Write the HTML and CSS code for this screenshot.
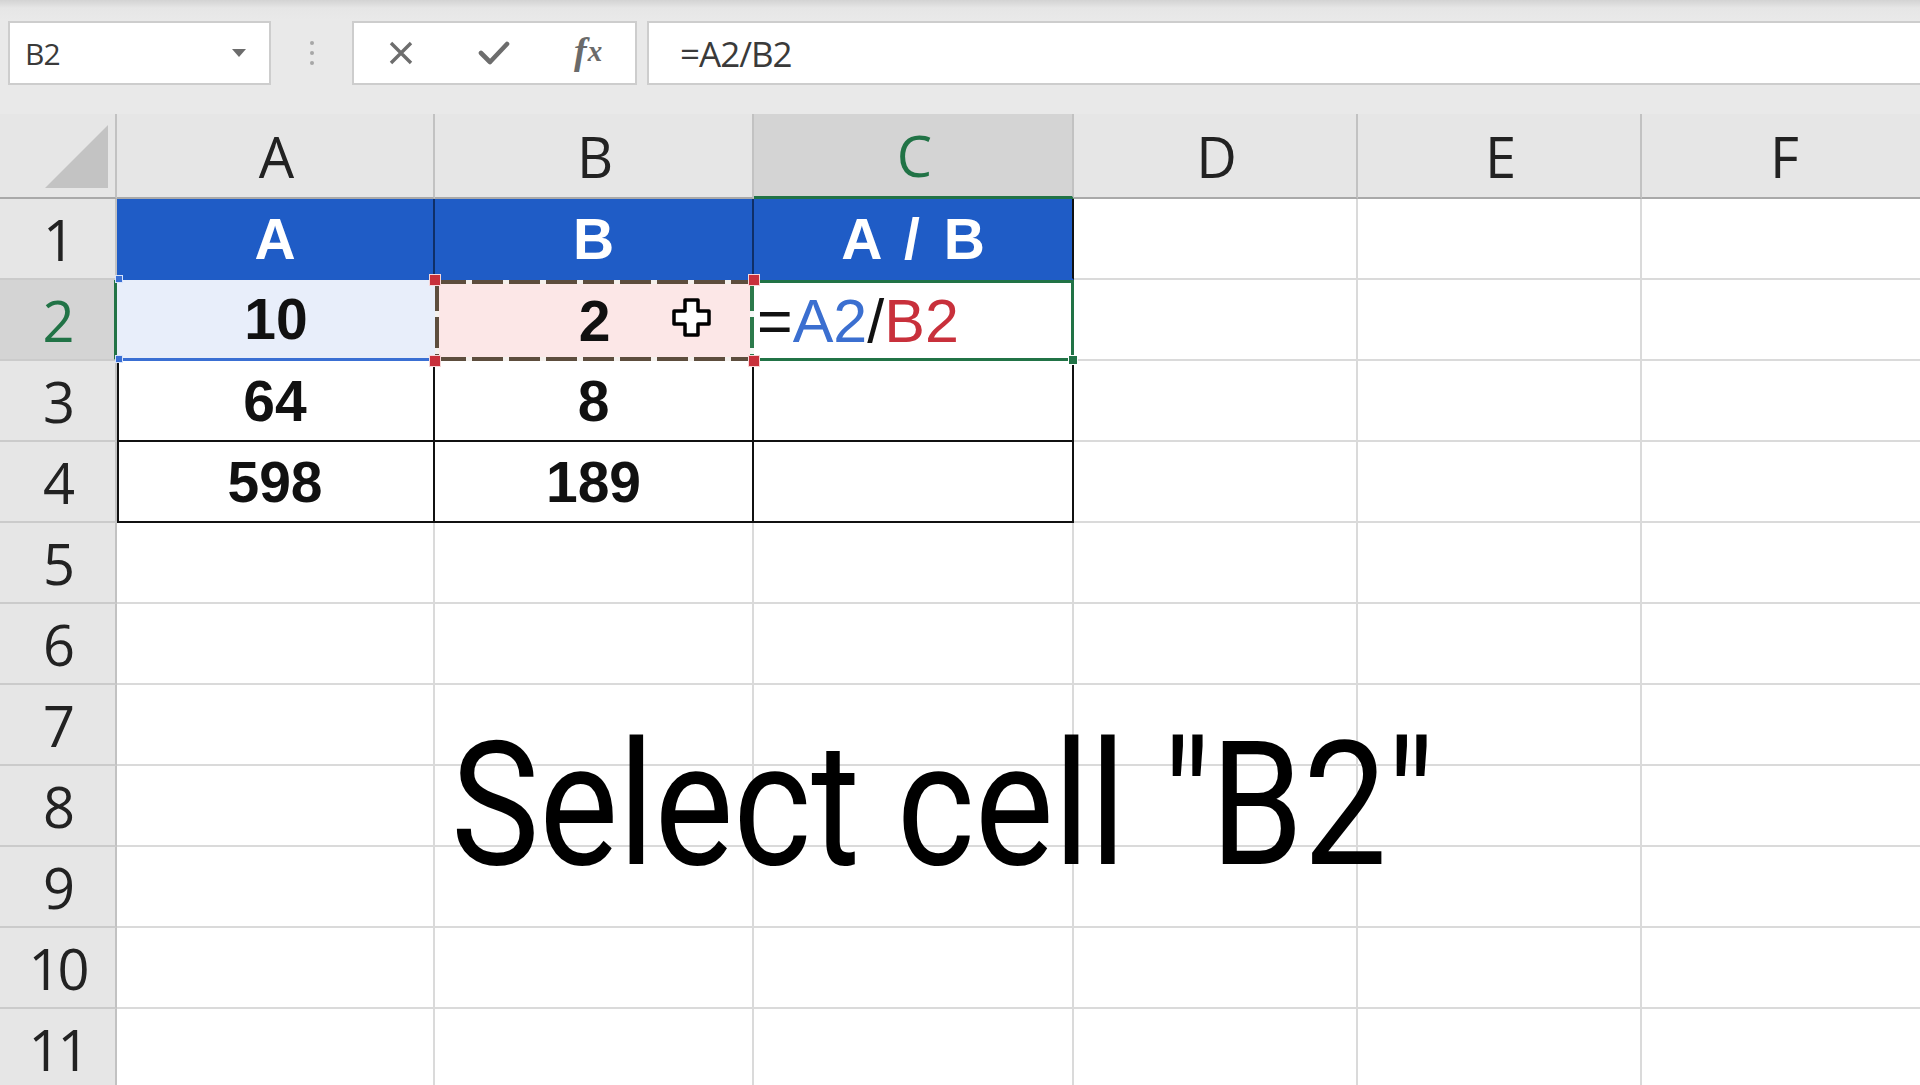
FILE: index.html
```html
<!DOCTYPE html>
<html lang="en">
<head>
<meta charset="utf-8">
<title>Excel - Select cell B2</title>
<link rel="stylesheet" href="styles.css">
</head>
<body>
<div class="app">
  <div class="fbar">
    <div class="namebox"><span class="nb-text">B2</span><span class="nb-arrow"></span></div>
    <div class="grip"><i></i><i></i><i></i></div>
    <div class="btns">
      <span class="btn"><svg width="28" height="26" viewBox="0 0 28 26"><path d="M4 3L24 23M24 3L4 23" stroke="#6d6d6d" stroke-width="3.4" fill="none"/></svg></span>
      <span class="btn"><svg width="34" height="28" viewBox="0 0 34 28"><path d="M4 14L13 23L30 5" stroke="#6d6d6d" stroke-width="4.6" fill="none" stroke-linecap="round" stroke-linejoin="round"/></svg></span>
      <span class="btn fx"><i>f</i><i class="fx-x">x</i></span>
    </div>
    <div class="formula">=A2/B2</div>
  </div>

  <div class="sheet">
    <div class="ch corner"><svg width="115" height="83" viewBox="0 0 115 83"><polygon points="45,74 108,11 108,74" fill="#c3c3c3"/></svg></div>
    <div class="ch">A</div><div class="ch">B</div><div class="ch sel">C</div><div class="ch">D</div><div class="ch">E</div><div class="ch">F</div>

    <div class="rh">1</div>
    <div class="c hdr">A</div><div class="c hdr">B</div><div class="c hdr hdr-last">A / B</div>
    <div class="c"></div><div class="c"></div><div class="c"></div>

    <div class="rh sel">2</div>
    <div class="c a2">10<span class="hd hd-blue hd-tl"></span><span class="hd hd-blue hd-bl"></span></div>
    <div class="c b2">2
      <span class="hd hd-red hd-tl"></span><span class="hd hd-red hd-tr"></span><span class="hd hd-red hd-bl"></span><span class="hd hd-red hd-br"></span>
      <svg class="cursor" width="42" height="42" viewBox="0 0 42 42"><path d="M14 3H27V14H38V27H27V38H14V27H3V14H14Z" fill="#fff" stroke="#000" stroke-width="3.5" stroke-linejoin="round"/></svg>
    </div>
    <div class="c c2"><span class="eq">=</span><span class="ref-a">A2</span><span class="eq">/</span><span class="ref-b">B2</span><span class="hd hd-green"></span></div>
    <div class="c"></div><div class="c"></div><div class="c"></div>

    <div class="rh">3</div>
    <div class="c t tl">64</div><div class="c t">8</div><div class="c t"></div>
    <div class="c"></div><div class="c"></div><div class="c"></div>

    <div class="rh">4</div>
    <div class="c t tl">598</div><div class="c t">189</div><div class="c t"></div>
    <div class="c"></div><div class="c"></div><div class="c"></div>

    <div class="rh">5</div><div class="c"></div><div class="c"></div><div class="c"></div><div class="c"></div><div class="c"></div><div class="c"></div>
    <div class="rh">6</div><div class="c"></div><div class="c"></div><div class="c"></div><div class="c"></div><div class="c"></div><div class="c"></div>
    <div class="rh">7</div><div class="c"></div><div class="c"></div><div class="c"></div><div class="c"></div><div class="c"></div><div class="c"></div>
    <div class="rh">8</div><div class="c"></div><div class="c"></div><div class="c"></div><div class="c"></div><div class="c"></div><div class="c"></div>
    <div class="rh">9</div><div class="c"></div><div class="c"></div><div class="c"></div><div class="c"></div><div class="c"></div><div class="c"></div>
    <div class="rh">10</div><div class="c"></div><div class="c"></div><div class="c"></div><div class="c"></div><div class="c"></div><div class="c"></div>
    <div class="rh">11</div><div class="c"></div><div class="c"></div><div class="c"></div><div class="c"></div><div class="c"></div><div class="c"></div>
  </div>

  <div class="caption">Select cell "B2"</div>
</div>
</body>
</html>
```

FILE: styles.css
```css
html, body {
  margin: 0;
  padding: 0;
}
body {
  width: 1920px;
  height: 1085px;
  overflow: hidden;
  background: #ffffff;
  font-family: "Open Sans", "Noto Sans", sans-serif;
}
.app {
  position: relative;
  width: 1920px;
  height: 1085px;
  overflow: hidden;
}

/* ---------- formula bar ---------- */
.fbar {
  height: 114px;
  box-sizing: border-box;
  padding-top: 21px;
  display: flex;
  align-items: flex-start;
  background: linear-gradient(#d3d3d3 0, #e6e6e6 8px, #e9e9e9 20px, #e9e9e9 100%);
}
.namebox {
  margin-left: 8px;
  width: 263px;
  height: 64px;
  box-sizing: border-box;
  background: #fff;
  border: 2px solid #cdcdcd;
  display: flex;
  align-items: center;
  padding-left: 15px;
}
.nb-text {
  font: 400 30px "Open Sans", sans-serif;
  color: #3a3a3a;
  letter-spacing: -1px;
}
.nb-arrow {
  margin-left: auto;
  margin-right: 23px;
  width: 0;
  height: 0;
  border-left: 7px solid transparent;
  border-right: 7px solid transparent;
  border-top: 8px solid #6c6c6c;
}
.grip {
  width: 81px;
  height: 64px;
  display: flex;
  flex-direction: column;
  align-items: center;
  justify-content: center;
  gap: 6px;
}
.grip i {
  display: block;
  width: 4px;
  height: 4px;
  border-radius: 50%;
  background: #a7a7a7;
}
.btns {
  width: 285px;
  height: 64px;
  box-sizing: border-box;
  background: #fff;
  border: 2px solid #cdcdcd;
  display: grid;
  grid-template-columns: 1fr 1fr 1fr;
}
.btn {
  display: flex;
  align-items: center;
  justify-content: center;
}
.fx {
  font-family: "Liberation Serif", "DejaVu Serif", serif;
  font-weight: 700;
  color: #6a6a6a;
  font-size: 38px;
  padding-bottom: 4px;
}
.fx i {
  font-style: italic;
}
.fx .fx-x {
  font-size: 29px;
  margin-left: 1px;
}
.formula {
  margin-left: 10px;
  flex: 1;
  height: 64px;
  box-sizing: border-box;
  background: #fff;
  border: 2px solid #cdcdcd;
  border-right: 0;
  display: flex;
  align-items: center;
  padding-left: 31px;
  font: 400 35px "Open Sans", sans-serif;
  color: #3a3a3a;
  letter-spacing: -1px;
}

/* ---------- sheet grid ---------- */
.sheet {
  display: grid;
  grid-template-columns: 117px 318px 319px 320px 284px 284px 284px;
  grid-template-rows: 85px repeat(11, 81px);
  width: 1926px;
}
.ch, .rh {
  box-sizing: border-box;
  background: #e6e6e6;
  display: flex;
  align-items: center;
  justify-content: center;
  font: 400 56px "Open Sans", "Noto Sans", sans-serif;
  color: #222;
  letter-spacing: -3px;
}
.ch {
  border-right: 2px solid #c2c2c2;
  border-bottom: 2px solid #a9a9a9;
}
.ch.sel {
  background: #d4d4d4;
  color: #217346;
  border-bottom: 3px solid #217346;
}
.corner {
  display: block;
  border-right: 2px solid #c2c2c2;
}
.corner svg {
  display: block;
}
.rh {
  border-right: 2px solid #c2c2c2;
  border-bottom: 2px solid #cbcbcb;
}
.rh.sel {
  background: #d4d4d4;
  color: #217346;
  border-right: 3px solid #217346;
}

.c {
  box-sizing: border-box;
  background: #fff;
  border-right: 2px solid #dadada;
  border-bottom: 2px solid #dadada;
  display: flex;
  align-items: center;
  justify-content: center;
  font: 700 57px "Liberation Sans", Arial, sans-serif;
  color: #111;
}
.hdr {
  background: #1f5cc6;
  color: #fff;
  border-right-color: #0f2f68;
  border-bottom-color: #1f5cc6;
  word-spacing: 8px;
}
.hdr-last {
  border-right-color: #111;
}
.t {
  border-right-color: #111;
  border-bottom-color: #111;
}
.tl {
  box-shadow: inset 2px 0 0 #111;
}

/* A2 reference (blue) */
.a2 {
  position: relative;
  background: #e8eefa;
  border-right: 0;
  border-bottom: 3px solid #3a6fd3;
}
/* B2 reference (red, marching ants) */
.b2 {
  position: relative;
  border: 0;
  background:
    repeating-linear-gradient(90deg, #5d4d3d 0 31px, #f4f0ec 31px 37px) left top / 100% 4px no-repeat,
    repeating-linear-gradient(90deg, #5d4d3d 0 31px, #f4f0ec 31px 37px) left bottom / 100% 4px no-repeat,
    repeating-linear-gradient(180deg, #5d4d3d 0 31px, #f4f0ec 31px 37px) left top / 4px 100% no-repeat,
    repeating-linear-gradient(180deg, #2c7a4b 0 31px, #f4f8f5 31px 37px) right top / 4px 100% no-repeat,
    #fce7e7;
}
.cursor {
  position: absolute;
  left: 236px;
  top: 17px;
}
/* C2 active cell */
.c2 {
  position: relative;
  border-top: 3px solid #217346;
  border-right: 3px solid #217346;
  border-bottom: 3px solid #217346;
  border-left: 0;
  justify-content: flex-start;
  padding-left: 3px;
  font-weight: 400;
  font-size: 61px;
}
.eq { color: #111; }
.ref-a { color: #3b6fd0; }
.ref-b { color: #c8303b; }

/* handles */
.hd {
  position: absolute;
  z-index: 3;
  box-sizing: border-box;
}
.hd-blue {
  width: 8px;
  height: 8px;
  background: #3a6fd3;
  border: 1px solid #d7e3fb;
}
.hd-red {
  width: 12px;
  height: 12px;
  background: #c8303b;
  border: 1px solid #f6d7d8;
}
.hd-green {
  width: 10px;
  height: 10px;
  background: #217346;
  border: 1px solid #fff;
  right: -7px;
  bottom: -7px;
}
.a2 .hd-tl { left: -2px; top: -5px; }
.a2 .hd-bl { left: -2px; bottom: -5px; }
.b2 .hd-tl { left: -6px; top: -6px; }
.b2 .hd-tr { right: -6px; top: -6px; }
.b2 .hd-bl { left: -6px; bottom: -6px; }
.b2 .hd-br { right: -6px; bottom: -6px; }

/* caption overlay */
.caption {
  position: absolute;
  left: 451px;
  top: 719px;
  z-index: 5;
  font: 400 173px "Roboto", "Liberation Sans", sans-serif;
  line-height: 1;
  color: #000;
  white-space: nowrap;
  transform: scaleX(0.86);
  transform-origin: 0 0;
}
```
